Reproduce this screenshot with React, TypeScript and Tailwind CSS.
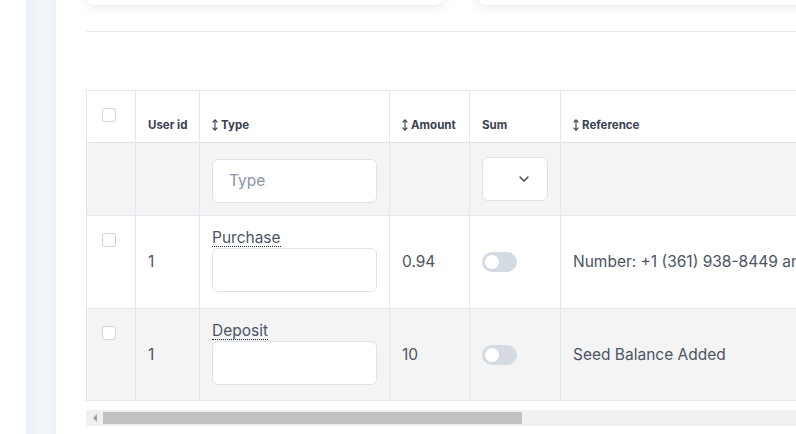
import React from 'react';

const SortIcon: React.FC = () => (
  <svg width="6" height="12" viewBox="0 0 6 12" className="inline-block mr-[3px] -mt-[2px]" fill="none" stroke="#374151" strokeWidth="1.1" strokeLinecap="round" strokeLinejoin="round">
    <path d="M3 1v10" />
    <path d="M1 3l2-2 2 2" />
    <path d="M1 9l2 2 2-2" />
  </svg>
);

const Checkbox: React.FC = () => (
  <div className="w-[14px] h-[14px] rounded-[3px] border border-[#cbd5e1] bg-white ml-[15px]" />
);

const Toggle: React.FC = () => (
  <div className="w-[35px] h-[20px] rounded-full bg-[#d4dbe3] flex items-center px-[3px]">
    <div className="w-[14px] h-[14px] rounded-full bg-white" />
  </div>
);

const rows = [
  { id: '1', type: 'Purchase', amount: '0.94', reference: 'Number: +1 (361) 938-8449 and Balance Added', bg: 'bg-white' },
  { id: '1', type: 'Deposit', amount: '10', reference: 'Seed Balance Added', bg: 'bg-[#f4f4f5]' },
];

export default function App() {
  return (
    <div className="flex min-h-screen bg-white font-['Inter',sans-serif] overflow-hidden">
      <div className="w-[26px] shrink-0" />
      <div className="w-[30px] shrink-0 bg-gradient-to-r from-[#ebf0f5] via-[#f4f7fa] to-[#eef2f6]" />

      <main className="flex-1 min-w-0 pl-[30px] overflow-hidden">
        {/* Cards */}
        <div className="flex gap-[33px] -mt-[40px]">
          <div className="w-[358px] h-[46px] shrink-0 rounded-lg bg-white shadow-[0_2px_12px_rgba(0,0,0,0.08)] border border-[#f1f1f1]" />
          <div className="w-[358px] h-[46px] shrink-0 rounded-lg bg-white shadow-[0_2px_12px_rgba(0,0,0,0.08)] border border-[#f1f1f1]" />
        </div>

        <div className="mt-[25px] border-t border-[#e5e7eb]" />

        {/* Table */}
        <div className="mt-[58px]">
          <table className="table-fixed border-collapse w-[1000px] text-[15.5px] text-[#4b5563]">
            <colgroup>
              <col className="w-[49px]" />
              <col className="w-[64px]" />
              <col className="w-[190px]" />
              <col className="w-[80px]" />
              <col className="w-[91px]" />
              <col className="w-[526px]" />
            </colgroup>
            <thead>
              <tr className="h-[52px] text-[11.5px] font-semibold text-[#374151] whitespace-nowrap">
                <th className="border border-[#e2e8f0] align-top pt-[17px]">
                  <Checkbox />
                </th>
                <th className="border border-[#e2e8f0] align-bottom text-left px-3 pb-[9px] leading-4">User id</th>
                <th className="border border-[#e2e8f0] align-bottom text-left px-3 pb-[9px] leading-4">
                  <SortIcon />Type
                </th>
                <th className="border border-[#e2e8f0] align-bottom text-left px-3 pb-[9px] leading-4">
                  <SortIcon />Amount
                </th>
                <th className="border border-[#e2e8f0] align-bottom text-left px-3 pb-[9px] leading-4">Sum</th>
                <th className="border border-[#e2e8f0] align-bottom text-left px-3 pb-[9px] leading-4">
                  <SortIcon />Reference
                </th>
              </tr>
            </thead>
            <tbody>
              <tr className="h-[73px] bg-[#f4f4f5]">
                <td className="border border-[#e2e8f0]" />
                <td className="border border-[#e2e8f0]" />
                <td className="border border-[#e2e8f0] align-top px-3 pt-[16px]">
                  <div className="h-[44px] w-[165px] rounded-md border border-[#dde3ea] bg-white flex items-center pl-4 text-[#8b95a7]">
                    Type
                  </div>
                </td>
                <td className="border border-[#e2e8f0]" />
                <td className="border border-[#e2e8f0] align-top px-3 pt-[14px]">
                  <div className="h-[44px] w-[66px] rounded-md border border-[#dde3ea] bg-white flex items-center justify-end pr-[18px]">
                    <svg width="10" height="6" viewBox="0 0 10 6" fill="none" stroke="#374151" strokeWidth="1.4" strokeLinecap="round" strokeLinejoin="round">
                      <path d="M1 1l4 4 4-4" />
                    </svg>
                  </div>
                </td>
                <td className="border border-[#e2e8f0]" />
              </tr>
              {rows.map((r, i) => (
                <tr key={i} className={`${i === 0 ? 'h-[93px]' : 'h-[92px]'} ${r.bg}`}>
                  <td className="border border-[#e2e8f0] align-top pt-[17px]">
                    <Checkbox />
                  </td>
                  <td className="border border-[#e2e8f0] px-3">{r.id}</td>
                  <td className="border border-[#e2e8f0] align-top px-3 pt-[13px]">
                    <span className="block w-fit border-b border-dotted border-[#1f2937] leading-[17px]">{r.type}</span>
                    <div className="h-[44px] w-[165px] rounded-md border border-[#dde3ea] bg-white mt-[1px]" />
                  </td>
                  <td className="border border-[#e2e8f0] px-3">{r.amount}</td>
                  <td className="border border-[#e2e8f0] px-3">
                    <Toggle />
                  </td>
                  <td className="border border-[#e2e8f0] px-3 whitespace-nowrap overflow-hidden">{r.reference}</td>
                </tr>
              ))}
            </tbody>
          </table>

          {/* Horizontal scrollbar */}
          <div className="mt-[9px] h-[16px] w-[1000px] bg-[#f1f1f1] flex items-center">
            <div className="w-[17px] flex justify-center">
              <div className="w-0 h-0 border-y-[4px] border-y-transparent border-r-[4px] border-r-[#a3a3a3]" />
            </div>
            <div className="h-[12px] w-[419px] bg-[#c1c1c1]" />
          </div>
        </div>
      </main>
    </div>
  );
}
